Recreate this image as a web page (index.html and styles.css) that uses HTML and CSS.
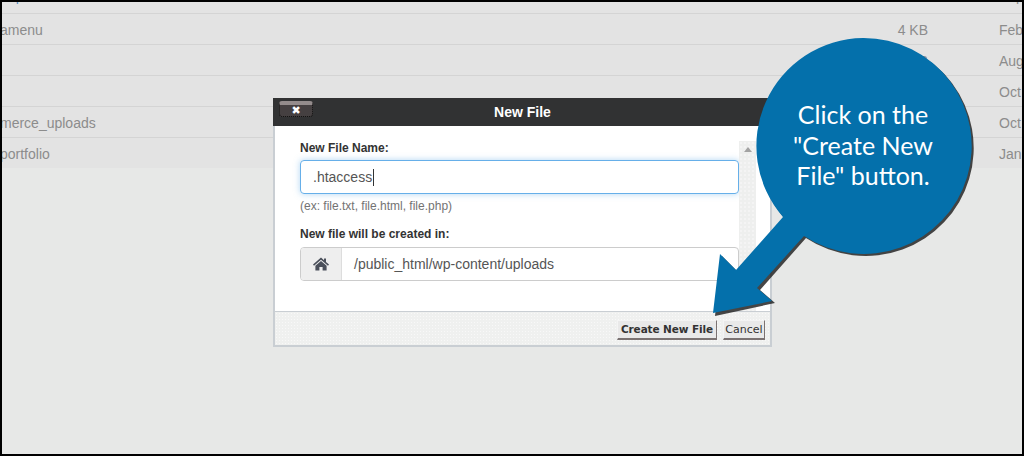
FILE: index.html
```html
<!DOCTYPE html>
<html lang="en">
<head>
<meta charset="utf-8">
<title>New File</title>
<link rel="stylesheet" href="styles.css">
</head>
<body>
<div class="frame">
  <div class="table">
    <div class="row row-cut"><span class="name">opm</span><span class="size">4 KB</span><span class="date">Sep</span></div>
    <div class="row"><span class="name">amenu</span><span class="size">4 KB</span><span class="date">Feb</span></div>
    <div class="row"><span class="name"></span><span class="size">4 KB</span><span class="date">Aug</span></div>
    <div class="row"><span class="name"></span><span class="size"></span><span class="date">Oct</span></div>
    <div class="row"><span class="name">merce_uploads</span><span class="size"></span><span class="date">Oct</span></div>
    <div class="row row-last"><span class="name">portfolio</span><span class="size"></span><span class="date">Jan</span></div>
  </div>

  <div class="dialog">
    <div class="dialog-head">
      <button class="close" type="button">&#10006;</button>
      <span class="dialog-title">New File</span>
    </div>
    <div class="dialog-body">
      <div class="form">
        <label class="label">New File Name:</label>
        <div class="input input-focus"><span>.htaccess</span><i class="caret"></i></div>
        <p class="hint">(ex: file.txt, file.html, file.php)</p>
        <label class="label label-second">New file will be created in:</label>
        <div class="group">
          <span class="addon">
            <svg class="home" viewBox="0 0 16 14" aria-hidden="true"><path d="M8 0.6 L11 3.2 V1.4 H13 V5 L16 7.6 L15 8.7 L8 2.7 L1 8.7 L0 7.6 Z M8 4 L13.6 8.7 V13.6 H9.6 V10 H6.4 V13.6 H2.4 V8.7 Z"/></svg>
          </span>
          <span class="path">/public_html/wp-content/uploads</span>
        </div>
      </div>
      <div class="scroll"><span class="scroll-up"></span></div>
    </div>
    <div class="dialog-foot">
      <button class="btn btn-main" type="button">Create New File</button>
      <button class="btn btn-cancel" type="button">Cancel</button>
    </div>
  </div>

  <svg class="callout-art" viewBox="0 0 1024 456" aria-hidden="true">
    <path class="callout-shadow" d="M865 40 A108 108 0 1 1 806 238 L760 290 L775 303 L715 316 L722 256 L738 272 L785 219 A108 108 0 0 1 865 40 Z"/>
    <path class="callout-fill" d="M863 38 A108 108 0 1 1 804 236 L757 288 L772 301 L713 313 L720 254 L736 270 L783 217 A108 108 0 0 1 863 38 Z"/>
  </svg>
  <p class="callout-text">Click on the<br>"Create New<br>File" button.</p>
</div>
</body>
</html>
```
FILE: styles.css
```css
* { box-sizing: border-box; }
html, body { margin: 0; padding: 0; }
body { width: 1024px; height: 456px; overflow: hidden; background: #000; }

.frame {
  position: relative;
  width: 1024px;
  height: 456px;
  border: 2px solid #000;
  background: #e7e8e7;
  overflow: hidden;
  font-family: "Liberation Sans", Arial, sans-serif;
}

.table { margin-left: -2px; width: 1024px; }
.row {
  display: flex;
  align-items: center;
  height: 31px;
  border-bottom: 1px solid #d4d4d4;
  background: #e3e3e3;
  color: #8c8c8c;
  font-size: 14px;
  padding-top: 1px;
}
.row-cut {
  height: 12px;
  align-items: flex-end;
  padding: 0 0 9px;
}
.row-cut .name { color: #5a8fc0; }
.row-last { height: 30px; border-bottom: 0; }
.name { flex: 1; padding-left: 8px; }
.row-cut ~ .row .name { padding-left: 0; }
.size { padding-right: 71px; white-space: nowrap; }
.date { width: 25px; flex: none; white-space: nowrap; }

.dialog {
  position: absolute;
  left: 271px;
  top: 96px;
  width: 499px;
  height: 249px;
  border: 2px solid #c9ced3;
  border-top: 0;
  background: #fff;
  display: flex;
  flex-direction: column;
}
.dialog-head {
  position: relative;
  height: 28px;
  margin: 0 -2px;
  background: #313233;
  display: flex;
  align-items: center;
  justify-content: center;
  flex: none;
}
.dialog-title { color: #fff; font-weight: bold; font-size: 14px; }
.close {
  position: absolute;
  left: 6px;
  top: 3px;
  width: 34px;
  height: 16px;
  padding: 0;
  border: 1px dotted #0c0c0c;
  border-top: 4px solid #948c8c;
  border-radius: 3px;
  background: #454041;
  color: #fff;
  font-family: "DejaVu Sans", sans-serif;
  font-size: 11px;
  font-weight: bold;
  line-height: 4px;
}
.dialog-body { flex: 1; display: flex; min-height: 0; }
.form { width: 464px; padding: 15px 0 0 25px; flex: none; }
.label { display: block; color: #333; font-size: 12px; font-weight: bold; line-height: 15px; }
.label-second { margin-top: 14px; }
.input {
  display: flex;
  align-items: center;
  width: 439px;
  height: 34px;
  margin-top: 4px;
  padding-left: 12px;
  border: 1px solid #66afe9;
  border-radius: 4px;
  box-shadow: 0 0 6px rgba(102,175,233,.5);
  color: #555;
  font-size: 14px;
}
.caret { width: 1px; height: 17px; background: #333; margin-left: 1px; }
.hint { margin: 5px 0 0; color: #737373; font-size: 12px; line-height: 14px; }
.group {
  display: flex;
  width: 439px;
  height: 34px;
  margin-top: 5px;
  border: 1px solid #ccc;
  border-radius: 4px;
}
.addon {
  display: flex;
  align-items: center;
  justify-content: center;
  width: 41px;
  background: #eee;
  border-right: 1px solid #ddd;
  border-radius: 3px 0 0 3px;
}
.home { width: 16px; height: 14px; fill: #4a4f5a; }
.path { display: flex; align-items: center; padding-left: 12px; color: #555; font-size: 14px; }
.scroll {
  width: 17px;
  margin-top: 15px;
  padding-top: 6px;
  display: flex;
  justify-content: center;
  align-items: flex-start;
  background: #eeefee radial-gradient(#fafafa .6px, transparent .8px) 0 0 / 4px 4px;
}
.scroll-up { width: 0; height: 0; border: 4px solid transparent; border-top: 0; border-bottom: 5px solid #a3a3a3; }
.dialog-foot {
  height: 34px;
  flex: none;
  display: flex;
  justify-content: flex-end;
  align-items: center;
  gap: 6px;
  padding: 2px 5px 0 0;
  background: #eff0ef radial-gradient(#f8f8f8 .5px, transparent .7px) 0 0 / 3px 3px;
  border-top: 1px solid #c9ced3;
}
.btn {
  height: 20px;
  padding: 0;
  border: 1px solid #f4f4f4;
  border-right: 1px solid #7a7272;
  border-bottom: 2px solid #7a7272;
  background: #e9e9e9;
  color: #333;
  font-family: "DejaVu Sans", sans-serif;
  font-size: 11px;
  white-space: nowrap;
}
.btn-main { width: 100px; font-weight: bold; font-size: 10.5px; letter-spacing: -.1px; }
.btn-cancel { width: 42px; }

.callout-art { position: absolute; left: -2px; top: -2px; width: 1024px; height: 456px; }
.callout-shadow { fill: #262626; opacity: .85; }
.callout-fill { fill: #0470ab; }
.callout-text {
  position: absolute;
  left: 771px;
  top: 97px;
  width: 180px;
  margin: 0;
  color: #fff;
  font-family: Lato, "Open Sans", sans-serif;
  font-size: 25px;
  line-height: 30.5px;
  text-align: center;
}
```
